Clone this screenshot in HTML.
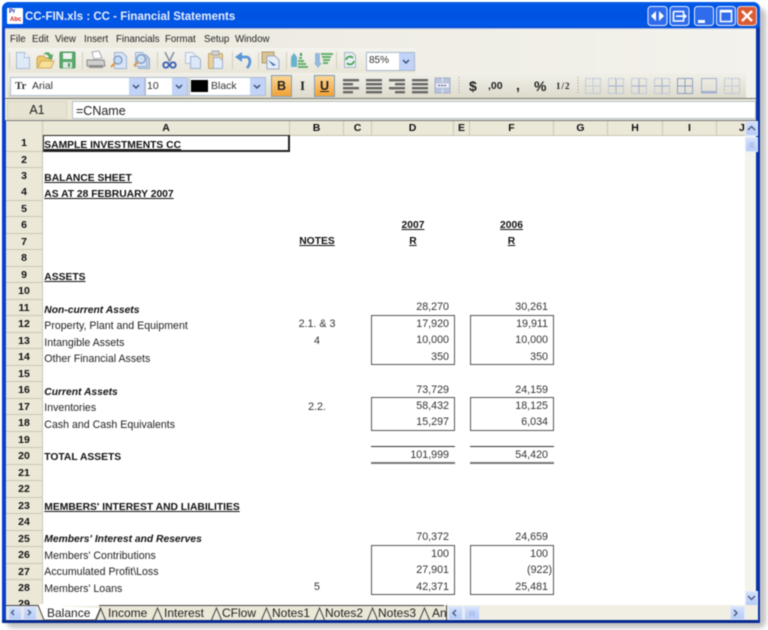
<!DOCTYPE html>
<html><head><meta charset="utf-8"><style>
html,body{margin:0;padding:0;background:#fff}
body{width:768px;height:630px;overflow:hidden;position:relative;font-family:"Liberation Sans",Arial,sans-serif}
#w{position:absolute;left:0;top:0;width:768px;height:630px;filter:blur(.5px)}
div,span.a{position:absolute}
.t,.b,.bu,.n,.c,.cb{position:absolute;white-space:nowrap;line-height:14px;height:14px}
.t{left:44.300px;font-size:10.6px;color:#222}
.b{left:44.300px;font-size:10.3px;font-weight:bold;color:#111}
.bu{left:44.300px;font-size:10.3px;font-weight:bold;color:#111;text-decoration:underline}
.bi{font-style:italic}
.n{font-size:10.7px;color:#333;text-align:right}
.d{left:372px;width:77px}
.f{left:470px;width:78px}
.c{font-size:10.7px;color:#333;text-align:center}
.cb{font-size:10.3px;font-weight:bold;color:#111;text-decoration:underline;text-align:center}
.ch{position:absolute;top:121px;height:14px;background:#ebe8d8;border-right:1px solid #c9c6b5;border-bottom:1px solid #c9c6b5;box-sizing:content-box;text-align:center;font:bold 10.5px/14px "Liberation Sans",sans-serif;color:#111}
.rh{position:absolute;left:6px;width:36px;height:15.5px;background:#ebe8d8;border-bottom:1px solid #c9c6b5;border-right:1px solid #c9c6b5;text-align:center;font:bold 10.5px/16px "Liberation Sans",sans-serif;color:#111}
.box{position:absolute;border:1px solid #555;box-sizing:border-box}
.hl{position:absolute;background:#333;height:1px}
.m{position:absolute;top:32px;font-size:9.7px;line-height:15px;color:#222}
.tab{position:absolute;top:606px;font-size:12px;line-height:15px;color:#222}
.sc{position:absolute;background:linear-gradient(#d3e0fb,#b6cbf7);border:1px solid #e3ebfb;box-sizing:border-box}
.ic{position:absolute;overflow:visible}
</style></head><body><div id="w">
<!-- shadow -->
<div style="left:6px;top:8px;width:760px;height:620px;background:#8a8a8a;border-radius:7px;opacity:.5;filter:blur(2px)"></div>
<!-- window -->
<div style="left:2px;top:2px;width:758px;height:621px;background:#0a3fc8;border-radius:7px 7px 0 0"></div>
<div style="left:2px;top:2px;width:758px;height:27px;border-radius:7px 7px 0 0;background:linear-gradient(#0a5fe8 0,#0058e6 10%,#0053e0 50%,#0058ea 85%,#0043c8 100%)"></div>
<div style="left:2px;top:620px;width:758px;height:3px;background:#06298f"></div>
<div style="left:756px;top:28px;width:4px;height:595px;background:#0833a8"></div>
<!-- title -->
<div style="left:7px;top:8px;width:16px;height:16px;background:#fff;border-radius:1px">
<span class="a" style="left:2px;top:0;font:bold 6px/8px 'Liberation Sans';color:#1a2ca8">Pr</span>
<span class="a" style="left:3px;top:8px;font:bold 6px/8px 'Liberation Sans';color:#d42020">Abc</span></div>
<div style="left:25px;top:10px;font:bold 11.5px/15px 'Liberation Sans',sans-serif;color:#e8eefc;white-space:nowrap">CC-FIN.xls : CC - Financial Statements</div>
<!-- title buttons -->
<svg class="ic" style="left:647px;top:5px" width="112" height="22">
<g fill="#2f6cec" stroke="#e6eeff" stroke-width="1"><rect x="1" y="1.500" width="19" height="19" rx="3"/><rect x="23" y="1.500" width="19" height="19" rx="3"/><rect x="47.500" y="1.500" width="19" height="19" rx="3"/><rect x="69.500" y="1.500" width="19" height="19" rx="3"/></g>
<rect x="90.500" y="1.500" width="19" height="19" rx="3" fill="#dc5a34" stroke="#f0d8d0"/>
<path d="M9 6v10l-5-5zM12 6v10l5-5z" fill="#fff"/>
<path d="M26.500 6.500h10v2M26.500 6.500v9.500h10v-2M29 11.200h8" stroke="#fff" stroke-width="1.600" fill="none"/><path d="M36 7.500l4 3.700-4 3.700z" fill="#fff"/>
<rect x="51" y="15" width="7" height="3" fill="#fff"/>
<rect x="73.500" y="5.500" width="11" height="11" fill="none" stroke="#fff" stroke-width="1.500"/><rect x="73" y="5" width="12" height="2.500" fill="#fff"/>
<path d="M95 6l10 10M105 6l-10 10" stroke="#fff" stroke-width="2.500"/>
</svg>
<!-- chrome -->
<div style="left:5px;top:28px;width:751px;height:71px;background:linear-gradient(90deg,#ece9dd,#f3f2ec)"></div>
<div style="left:5px;top:28px;width:751px;height:1px;background:#9db5e8"></div>
<div class="m" style="left:10px">File</div><div class="m" style="left:32px">Edit</div><div class="m" style="left:55px">View</div><div class="m" style="left:84px">Insert</div><div class="m" style="left:116px">Financials</div><div class="m" style="left:165px">Format</div><div class="m" style="left:204px">Setup</div><div class="m" style="left:235px">Window</div>
<!-- toolbars -->
<div style="left:8px;top:48px;width:408px;height:25px;background:linear-gradient(#f4f3ee,#e9e6d8);border-radius:2px"></div>
<div style="left:8px;top:73px;width:354px;height:25px;background:linear-gradient(#f1f0e9,#dedbcc)"></div>
<div style="left:362px;top:73px;width:384px;height:25px;background:linear-gradient(#f1f0e9,#dedbcc)"></div>
<svg class="ic" style="left:0;top:48px" width="420" height="25">
<g stroke="#d2cfbe"><path d="M9.500 4v17M82.500 4v17M157.500 4v17M232.500 4v17M258.500 4v17M286.500 4v17M336.500 4v17"/></g>
<!-- new -->
<path d="M16.500 4.500h8l5 5v11h-13z" fill="#dfeaf8" stroke="#a9bcd6"/><path d="M24.500 4.500v5h5" fill="#fff" stroke="#a9bcd6"/>
<!-- open -->
<path d="M37 10l2-2h5l1 2h6v10H37z" fill="#eec868" stroke="#c8a452"/><path d="M38 20l3-7h13l-3 7z" fill="#f8e09a" stroke="#d0ae5c"/><path d="M43 6c4-3 7-2 8 1l2-1-1 6-5-2 2-1c-1-2-3-3-6-3z" fill="#5aa966"/>
<!-- save -->
<rect x="60" y="4" width="15" height="16" rx="1" fill="#5aa86c" stroke="#4d9a60"/><rect x="63" y="5" width="9" height="6" fill="#eef3ef"/><rect x="63" y="14" width="9" height="6" fill="#dfeae0"/><rect x="68" y="15" width="2" height="4" fill="#4d9a60"/>
<!-- print -->
<path d="M92 4l7-1 3 7-8 1z" fill="#fff" stroke="#aab"/><path d="M87 12h17l1 6H87z" fill="#cfcfcf" stroke="#8a8a8a"/><rect x="89" y="17" width="14" height="3" fill="#8f8f8f"/>
<!-- preview -->
<path d="M114.500 4.500h8l4 4v12h-12z" fill="#d9e5f7" stroke="#9fb3d0"/><circle cx="118" cy="12" r="4" fill="#c4dbf6" stroke="#7d98be" stroke-width="1.300"/><path d="M115 15l-4 4" stroke="#dd9440" stroke-width="2"/>
<!-- preview2 -->
<path d="M138.500 6.500h7l4 4v10h-11z" fill="#b9cde6" stroke="#9aaeca"/><path d="M135.500 4.500h7l4 4v10h-11z" fill="#d7e3f5" stroke="#9fb3d0"/><circle cx="141" cy="11" r="4.300" fill="#cde0f6" stroke="#7d98be" stroke-width="1.300"/><path d="M138 14l-4 4" stroke="#dd9440" stroke-width="2"/>
<!-- cut -->
<path d="M165 4l5 10M174 4l-5 10" stroke="#8894a2" stroke-width="1.600"/><circle cx="166" cy="17" r="2.700" fill="none" stroke="#3a62b4" stroke-width="1.900"/><circle cx="173" cy="17" r="2.700" fill="none" stroke="#3a62b4" stroke-width="1.900"/>
<!-- copy -->
<path d="M185.500 4.500h7l3 3v8h-10z" fill="#eef3fb" stroke="#b3c3da"/><path d="M190.500 8.500h7l3 3v9h-10z" fill="#dce7f7" stroke="#9cb1d2"/>
<!-- paste -->
<rect x="208.500" y="5.500" width="14" height="15" rx="1" fill="#ebd09a" stroke="#c0a66e"/><rect x="212" y="3" width="7" height="4" fill="#d4d4d4" stroke="#aaa"/><path d="M213.500 9.500h6l3 3v8h-9z" fill="#e3ecf9" stroke="#9fb3d0"/>
<!-- undo -->
<path d="M238 9h8c5 0 5 7 1 11" fill="none" stroke="#5d96d6" stroke-width="2.800"/><path d="M242 4l-7 5 7 5z" fill="#5d96d6"/>
<!-- img -->
<rect x="262" y="4" width="12" height="11" fill="#dcc290" stroke="#a89a78"/><path d="M267 8h8l4 4v9h-12z" fill="#e6edf8" stroke="#9aabc6"/><path d="M268 12l8 5-3 1z" fill="#4d78b0"/>
<!-- sort -->
<path d="M291 9l3-4 3 4v10h-6z" fill="#69b2ce"/><path d="M299 9h3v2h-3zM298 12h6v2h-6zM298 15h8v2h-8zM298 18h10v2h-10z" fill="#66b06e"/><path d="M300 5h2v3h-2z" fill="#4a9658"/>
<path d="M315 5h5v10h2l-4 5-4-5h1z" fill="#95b8dc"/><path d="M321 5h12v2h-12zM322 8h9v2h-9zM323 11h7v2h-7zM323 14h5v2h-5z" fill="#66b06e"/>
<!-- refresh -->
<path d="M344.500 4.500h8l3 3v12h-11z" fill="#e8eef4" stroke="#a8b5c4"/><path d="M346 12a4 4 0 0 1 7-2M354 13a4 4 0 0 1-7 2" stroke="#4aa656" stroke-width="1.800" fill="none"/>
<!-- zoom combo -->
<rect x="366.500" y="4.500" width="48" height="18" fill="#fff" stroke="#a9b8cc"/><rect x="399" y="5" width="15" height="17" fill="#c1d3f6"/><path d="M403 12l3 3 3-3" stroke="#3a4f7c" stroke-width="1.500" fill="none"/>
</svg>
<div style="left:369px;top:54px;font:10px/14px 'Liberation Sans';color:#333">85%</div>
<!-- format bar -->
<svg class="ic" style="left:0;top:73px" width="760" height="25">
<defs><linearGradient id="o" x1="0" y1="0" x2="0" y2="1"><stop offset="0" stop-color="#fbd898"/><stop offset="1" stop-color="#f2a030"/></linearGradient></defs>
<g fill="#fff" stroke="#b0bed2"><rect x="10.500" y="4.500" width="134" height="18"/><rect x="145.500" y="4.500" width="42" height="18"/><rect x="189.500" y="4.500" width="76" height="18"/></g>
<g fill="#c1d3f6"><rect x="129" y="5" width="15" height="17"/><rect x="172" y="5" width="15" height="17"/><rect x="250" y="5" width="15" height="17"/></g>
<g stroke="#3a4f7c" stroke-width="1.500" fill="none"><path d="M133 12l3 3 3-3M176 12l3 3 3-3M254 12l3 3 3-3"/></g>
<rect x="191" y="7" width="17" height="12" fill="#000"/>
<rect x="271.500" y="2.500" width="20" height="21" fill="url(#o)" stroke="#7f9db9"/><rect x="314.500" y="2.500" width="20" height="21" fill="url(#o)" stroke="#7f9db9"/>
<g fill="#666"><path d="M343 6h16v2.400h-16zM343 10h10v2.400h-10zM343 14h16v2.400h-16zM343 18h10v2.400h-10z"/><path d="M366 6h16v2.400h-16zM366 10h16v2.400h-16zM366 14h16v2.400h-16zM366 18h16v2.400h-16z"/><path d="M389 6h16v2.400h-16zM395 10h10v2.400h-10zM389 14h16v2.400h-16zM395 18h10v2.400h-10z"/><path d="M412 6h16v2.400h-16zM412 10h16v2.400h-16zM412 14h16v2.400h-16zM412 18h16v2.400h-16z"/></g>
<rect x="435" y="5" width="15" height="15" fill="#b9c5dc" stroke="#a4b0c8"/><path d="M436 12.500h13" stroke="#eef" stroke-width="4"/><path d="M442.500 5v4M442.500 16v4" stroke="#eef"/><path d="M438 12.500h9" stroke="#445" stroke-dasharray="2 1"/>
<path d="M459 4v18M578 4v18" stroke="#9a9888" stroke-dasharray="1 2"/>
<g fill="none" stroke="#b0bfdc"><path d="M585.500 5.500h15v15h-15zM585.500 13h15M593 5.500v15" stroke-dasharray="2 1"/><path d="M608.500 5.500h15v15h-15z" stroke-dasharray="2 1"/><path d="M608.500 13h15M616 5.500v15" stroke="#9fb0d0"/><path d="M631.500 5.500h15v15h-15z" stroke-dasharray="2 1"/><path d="M631.500 13h15M639 5.500v15" stroke="#9fb0d0"/><path d="M654.500 5.500h15v15h-15z" stroke-dasharray="2 1"/><path d="M654.500 13h15M662 5.500v15" stroke="#9fb0d0"/><path d="M677.500 5.500h15v15h-15zM677.500 13h15M685 5.500v15" stroke="#8d9fc4"/><path d="M701.500 5.500h15v13" stroke="#9fb0d0"/><path d="M701.500 5.500v14h15v-2" stroke="#9fb0d0"/><rect x="701" y="18" width="16" height="2.500" fill="#9fb0d0" stroke="none"/><path d="M724.500 5.500h15v15h-15zM724.500 13h15M732 5.500v15" stroke-dasharray="2 1"/></g>
</svg>
<svg class="ic" style="left:15px;top:79px" width="14" height="13"><text x="0" y="10" font-family="Liberation Serif" font-weight="bold" font-size="11" fill="#333">Tr</text></svg>
<div style="left:32px;top:79px;font:10.5px/14px 'Liberation Sans';color:#333">Arial</div>
<div style="left:147px;top:79px;font:10.5px/14px 'Liberation Sans';color:#333">10</div>
<div style="left:211px;top:79px;font:10.5px/14px 'Liberation Sans';color:#333">Black</div>
<div style="left:271px;top:79px;width:21px;text-align:center;font:bold 12.5px/14px 'Liberation Sans';color:#222">B</div>
<div style="left:292px;top:79px;width:21px;text-align:center;font:bold 12.5px/14px 'Liberation Serif';color:#222">I</div>
<div style="left:314px;top:79px;width:21px;text-align:center;font:bold 12.5px/14px 'Liberation Sans';color:#222;text-decoration:underline">U</div>
<div style="left:469px;top:78px;font:bold 14px/16px 'Liberation Sans';color:#222">$</div>
<div style="left:488px;top:79px;font:bold 10.5px/14px 'Liberation Sans';color:#222">,00</div>
<div style="left:516px;top:77px;font:bold 14px/16px 'Liberation Sans';color:#222">,</div>
<div style="left:534px;top:78px;font:bold 14px/16px 'Liberation Sans';color:#222">%</div>
<div style="left:556px;top:79px;font:bold 9px/14px 'Liberation Serif';color:#222;letter-spacing:1px">1/2</div>
<!-- formula bar -->
<div style="left:5px;top:98px;width:751px;height:23px;background:#ece9d8;border-top:1px solid #777;box-sizing:border-box"></div>
<div style="left:7px;top:101px;width:60px;height:18px;background:#e6e3d3;border:1px solid #d8d5c5;box-sizing:border-box;text-align:center;font:12.5px/17px 'Liberation Sans';color:#222">A1</div>
<div style="left:72px;top:101px;width:684px;height:18px;background:#fff;border:1px solid #b6c2cc;box-sizing:border-box;padding-left:3px;font:12.5px/18px 'Liberation Sans';color:#222">=CName</div>
<!-- sheet -->
<div style="left:6px;top:120px;width:750px;height:486px;background:#fff"></div>
<div style="left:5px;top:120px;width:751px;height:1px;background:#777"></div>
<div class="ch" style="left:6px;width:36px"></div>
<div class="ch" style="left:43px;width:246px">A</div>
<div class="ch" style="left:290px;width:53px">B</div>
<div class="ch" style="left:344px;width:27px">C</div>
<div class="ch" style="left:372px;width:81px">D</div>
<div class="ch" style="left:454px;width:15px">E</div>
<div class="ch" style="left:470px;width:83px">F</div>
<div class="ch" style="left:554px;width:53px">G</div>
<div class="ch" style="left:608px;width:54px">H</div>
<div class="ch" style="left:663px;width:53px">I</div>
<div class="ch" style="left:717px;width:28px;text-align:left;overflow:hidden"><span style="margin-left:22px">J</span></div>
<div class="rh" style="top:135px">1</div><div class="rh" style="top:151.500px">2</div><div class="rh" style="top:168px">3</div><div class="rh" style="top:184.400px">4</div><div class="rh" style="top:200.900px">5</div><div class="rh" style="top:217.400px">6</div><div class="rh" style="top:233.900px">7</div><div class="rh" style="top:250.400px">8</div><div class="rh" style="top:266.800px">9</div><div class="rh" style="top:283.300px">10</div><div class="rh" style="top:299.800px">11</div><div class="rh" style="top:316.300px">12</div><div class="rh" style="top:332.800px">13</div><div class="rh" style="top:349.200px">14</div><div class="rh" style="top:365.700px">15</div><div class="rh" style="top:382.200px">16</div><div class="rh" style="top:398.700px">17</div><div class="rh" style="top:415.200px">18</div><div class="rh" style="top:431.600px">19</div><div class="rh" style="top:448.100px">20</div><div class="rh" style="top:464.600px">21</div><div class="rh" style="top:481.100px">22</div><div class="rh" style="top:497.600px">23</div><div class="rh" style="top:514px">24</div><div class="rh" style="top:530.500px">25</div><div class="rh" style="top:547px">26</div><div class="rh" style="top:563.500px">27</div><div class="rh" style="top:580px">28</div><div class="rh" style="top:596.400px;height:9px;overflow:hidden;border-bottom:0">29</div>
<!-- selection -->
<div style="left:43px;top:135px;width:247px;height:17px;border:1px solid #222;border-right-width:2px;border-bottom-width:2px;box-sizing:border-box"></div>
<!-- boxes -->
<div class="box" style="left:371px;top:315px;width:84px;height:50px"></div><div class="box" style="left:470px;top:315px;width:84px;height:50px"></div>
<div class="box" style="left:371px;top:397px;width:84px;height:34px"></div><div class="box" style="left:470px;top:397px;width:84px;height:34px"></div>
<div class="box" style="left:371px;top:545px;width:84px;height:50px"></div><div class="box" style="left:470px;top:545px;width:84px;height:50px"></div>
<div class="hl" style="left:371px;top:446px;width:84px"></div><div class="hl" style="left:470px;top:446px;width:84px"></div>
<div class="hl" style="left:371px;top:462px;width:84px;height:2px;background:#777"></div><div class="hl" style="left:470px;top:462px;width:84px;height:2px;background:#777"></div>
<!-- text -->
<div class="bu" style="top:139px">SAMPLE INVESTMENTS CC</div>
<div class="bu" style="top:172px">BALANCE SHEET</div>
<div class="bu" style="top:188px">AS AT 28 FEBRUARY 2007</div>
<div class="bu" style="top:271px">ASSETS</div>
<div class="b bi" style="top:304px">Non-current Assets</div>
<div class="t" style="top:319px">Property, Plant and Equipment</div>
<div class="t" style="top:336px">Intangible Assets</div>
<div class="t" style="top:352px">Other Financial Assets</div>
<div class="b bi" style="top:386px">Current Assets</div>
<div class="t" style="top:401px">Inventories</div>
<div class="t" style="top:418px">Cash and Cash Equivalents</div>
<div class="b" style="top:451px">TOTAL ASSETS</div>
<div class="bu" style="top:501px">MEMBERS' INTEREST AND LIABILITIES</div>
<div class="b bi" style="top:533px">Members' Interest and Reserves</div>
<div class="t" style="top:549px">Members' Contributions</div>
<div class="t" style="top:565px">Accumulated Profit\Loss</div>
<div class="t" style="top:582px">Members' Loans</div>
<div class="cb" style="left:290px;width:54px;top:235px">NOTES</div>
<div class="c" style="left:290px;width:54px;top:317px">2.1. &amp; 3</div>
<div class="c" style="left:290px;width:54px;top:334px">4</div>
<div class="c" style="left:290px;width:54px;top:400px">2.2.</div>
<div class="c" style="left:290px;width:54px;top:580px">5</div>
<div class="cb" style="left:372px;width:82px;top:219px">2007</div><div class="cb" style="left:372px;width:82px;top:235px">R</div>
<div class="cb" style="left:470px;width:83px;top:219px">2006</div><div class="cb" style="left:470px;width:83px;top:235px">R</div>
<div class="n d" style="top:300px">28,270</div><div class="n f" style="top:300px">30,261</div>
<div class="n d" style="top:317px">17,920</div><div class="n f" style="top:317px">19,911</div>
<div class="n d" style="top:333px">10,000</div><div class="n f" style="top:333px">10,000</div>
<div class="n d" style="top:350px">350</div><div class="n f" style="top:350px">350</div>
<div class="n d" style="top:383px">73,729</div><div class="n f" style="top:383px">24,159</div>
<div class="n d" style="top:399px">58,432</div><div class="n f" style="top:399px">18,125</div>
<div class="n d" style="top:415px">15,297</div><div class="n f" style="top:415px">6,034</div>
<div class="n d" style="top:448px">101,999</div><div class="n f" style="top:448px">54,420</div>
<div class="n d" style="top:530px">70,372</div><div class="n f" style="top:530px">24,659</div>
<div class="n d" style="top:547px">100</div><div class="n f" style="top:547px">100</div>
<div class="n d" style="top:563px">27,901</div><div class="n f" style="top:563px;width:82px">(922)</div>
<div class="n d" style="top:580px">42,371</div><div class="n f" style="top:580px">25,481</div>
<!-- vscroll -->
<div style="left:745px;top:121px;width:11px;height:484px;background:#f4f3ec"></div>
<div class="sc" style="left:745px;top:121px;width:13px;height:15px"></div>
<div class="sc" style="left:745px;top:137px;width:13px;height:15px"></div>
<div class="sc" style="left:745px;top:591px;width:13px;height:15px"></div>
<svg class="ic" style="left:745px;top:121px" width="13" height="485"><path d="M3 9l3.500-3.500L10 9M3 475l3.500 3.500L10 475" fill="none" stroke="#4d6185" stroke-width="1.500"/><path d="M4 22h5M4 24h5M4 26h5" stroke="#9fb5e2"/></svg>
<!-- tabs -->
<div style="left:6px;top:605px;width:750px;height:15px;background:#ebe8d8"></div>
<div style="left:6px;top:605px;width:438px;height:1px;background:#444"></div>
<div style="left:444px;top:605px;width:314px;height:15px;background:#f1efe3"></div>
<div class="sc" style="left:8px;top:606px;width:14px;height:14px"></div><div class="sc" style="left:23px;top:606px;width:14px;height:14px"></div>
<svg class="ic" style="left:0;top:605px" width="470" height="16">
<path d="M14 10l-2.500-2.500L14 5M28 5l2.500 2.500L28 10" fill="none" stroke="#4d6185" stroke-width="1.500"/>
<path d="M38 0l6 15h52l5-12" fill="#fff" stroke="#444"/><path d="M39 0h60" stroke="#fff" stroke-width="2"/>
<path d="M95.500 15l5-12 5 12M152.500 15l5-12 5 12M211.500 15l5-12 5 12M261.500 15l5-12 5 12M314.500 15l5-12 5 12M367.500 15l5-12 5 12M419.500 15l5-12 5 12" fill="none" stroke="#444"/>
<path d="M446.500 0v15" stroke="#444"/></svg>
<div class="tab" style="left:47px">Balance</div><div class="tab" style="left:108px">Income</div><div class="tab" style="left:164px">Interest</div><div class="tab" style="left:222px">CFlow</div><div class="tab" style="left:272px">Notes1</div><div class="tab" style="left:325px">Notes2</div><div class="tab" style="left:378px">Notes3</div><div class="tab" style="left:432px;width:14px;overflow:hidden">Annexure</div>
<div class="sc" style="left:448px;top:606px;width:15px;height:14px"></div><div class="sc" style="left:464px;top:606px;width:16px;height:14px"></div><div class="sc" style="left:730px;top:606px;width:15px;height:14px"></div>
<svg class="ic" style="left:448px;top:606px" width="300" height="14"><path d="M8 4L5 7l3 3M286 4l3 3-3 3" fill="none" stroke="#4d6185" stroke-width="1.500"/><path d="M22 5v5M24 5v5M26 5v5" stroke="#9fb5e2"/></svg>
</div></body></html>
